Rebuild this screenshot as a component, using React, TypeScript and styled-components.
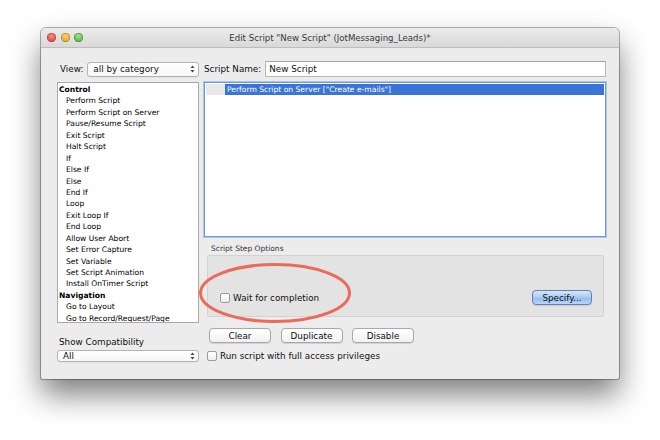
import React from 'react'
import styled, { createGlobalStyle } from 'styled-components'

const GlobalStyle = createGlobalStyle`
  html, body {
    margin: 0;
    padding: 0;
    background: #ffffff;
  }
  body {
    font-family: "DejaVu Sans", "Liberation Sans", sans-serif;
    color: #111111;
  }
`

const Stage = styled.div`
  width: 660px;
  height: 440px;
  padding: 28px 0 0 41px;
  box-sizing: border-box;
  overflow: hidden;
`

const Window = styled.div`
  position: relative;
  width: 578px;
  height: 351px;
  background: #ececec;
  border-radius: 5px 5px 2px 2px;
  box-shadow: 0 0 0 1px rgba(0, 0, 0, 0.3), 0 16px 30px rgba(0, 0, 0, 0.5);
  display: flex;
  flex-direction: column;
`

const TitleBar = styled.div`
  height: 20px;
  display: grid;
  grid-template-columns: 60px 1fr 60px;
  align-items: center;
  background: linear-gradient(#ebebeb, #d9d9d9);
  border-bottom: 1px solid #bdbdbd;
  border-radius: 5px 5px 0 0;
  box-sizing: border-box;
`

const Lights = styled.div`
  display: flex;
  gap: 4.5px;
  padding-left: 6px;
`

const Light = styled.span<{ $c: string; $d: string }>`
  width: 9px;
  height: 9px;
  border-radius: 50%;
  background: radial-gradient(circle at 50% 35%, ${p => p.$c} 0%, ${p => p.$d} 90%);
  box-shadow: inset 0 0 0 0.5px rgba(0, 0, 0, 0.35);
`

const Title = styled.div`
  text-align: center;
  font-size: 8.6px;
  color: #3a3a3a;
  white-space: nowrap;
`

const Body = styled.div`
  display: flex;
  gap: 5px;
  padding: 13px 13px 0 16px;
`

const LeftCol = styled.div`
  width: 142px;
  display: flex;
  flex-direction: column;
`

const RightCol = styled.div`
  flex: 1;
  display: flex;
  flex-direction: column;
`

const HeaderRow = styled.div`
  height: 16px;
  display: flex;
  align-items: center;
  gap: 4px;
  margin-bottom: 5px;
`

const Label = styled.span<{ $indent?: number }>`
  font-size: 8.8px;
  white-space: nowrap;
  padding-left: ${p => p.$indent ?? 0}px;
`

const Select = styled.div`
  height: 15px;
  flex: 1;
  box-sizing: border-box;
  background: linear-gradient(#ffffff, #f6f6f6);
  border: 1px solid #b3b3b3;
  border-radius: 3px;
  display: flex;
  align-items: center;
  justify-content: space-between;
  padding: 0 3px 0 5px;
  font-size: 8.8px;
  box-shadow: 0 0.5px 0 rgba(0, 0, 0, 0.08);
`

const TextInput = styled.div`
  flex: 1;
  height: 16px;
  box-sizing: border-box;
  background: #ffffff;
  border: 1px solid #b8b8b8;
  border-top-color: #a4a4a4;
  display: flex;
  align-items: center;
  padding-left: 3px;
  font-size: 8.8px;
`

const StepList = styled.div`
  height: 241px;
  box-sizing: border-box;
  background: #ffffff;
  border: 1px solid #a9a9a9;
  padding: 1px 0 0 1px;
  overflow: hidden;
`

const StepItem = styled.div<{ $header?: boolean }>`
  height: 11.45px;
  line-height: 11.45px;
  font-size: 7.6px;
  color: #000;
  white-space: nowrap;
  font-weight: ${p => (p.$header ? 'bold' : 'normal')};
  padding-left: ${p => (p.$header ? 0 : 7)}px;
`

const CompatLabel = styled(Label)`
  margin: 14px 0 3px 2px;
`

const ScriptList = styled.div`
  height: 155px;
  box-sizing: border-box;
  background: #ffffff;
  border: 1px solid #6f9ad6;
  box-shadow: 0 0 0 1px #aac5ec;
  padding: 1px 1px 0 1px;
`

const ScriptRow = styled.div`
  height: 11px;
  display: flex;
`

const RowGutter = styled.div`
  width: 19px;
  background: #e9e9e9;
`

const RowText = styled.div<{ $selected?: boolean }>`
  flex: 1;
  background: ${p => (p.$selected ? '#3a74d6' : 'transparent')};
  color: ${p => (p.$selected ? '#ffffff' : 'inherit')};
  font-size: 7.6px;
  line-height: 11px;
  padding-left: 2px;
  white-space: nowrap;
`

const GroupLabel = styled.div`
  font-size: 7.5px;
  color: #333;
  margin: 7px 0 2px 7px;
`

const OptionsBox = styled.div`
  height: 62px;
  margin: 0 2px 0 3px;
  box-sizing: border-box;
  background: #e3e3e3;
  border: 1px solid #d2d2d2;
  border-radius: 2px;
  display: flex;
  align-items: flex-end;
  justify-content: space-between;
  padding: 0 11px 11px 12px;
`

const CheckRow = styled.label`
  display: flex;
  align-items: center;
  gap: 3px;
  font-size: 8.8px;
`

const Box = styled.span`
  width: 10px;
  height: 10px;
  box-sizing: border-box;
  border: 1px solid #9c9c9c;
  border-radius: 2px;
  background: linear-gradient(#ffffff, #ededed);
`

const Button = styled.div<{ $w?: number; $primary?: boolean }>`
  width: ${p => p.$w ?? 62}px;
  height: 15px;
  box-sizing: border-box;
  border: 1px solid ${p => (p.$primary ? '#5f82b8' : '#a9a9a9')};
  border-radius: 4px;
  background: ${p =>
    p.$primary
      ? 'linear-gradient(#d6e6fa 0%, #a9caf2 50%, #8fb8ee 51%, #b9d6f7 100%)'
      : 'linear-gradient(#ffffff, #f1f1f1)'};
  display: flex;
  align-items: center;
  justify-content: center;
  font-size: 8.8px;
  box-shadow: 0 0.5px 1px rgba(0, 0, 0, 0.12);
`

const OptionInner = styled.div`
  display: flex;
  align-items: center;
  height: 15px;
`

const ButtonRow = styled.div`
  display: flex;
  gap: 9.5px;
  margin: 11px 0 0 5px;
`

const BottomCheck = styled.div`
  margin: 8px 0 0 3px;
`

const Highlight = styled.svg`
  position: absolute;
  left: 157px;
  top: 234px;
  pointer-events: none;
`

const Arrows = () => (
  <svg width="5" height="8" viewBox="0 0 5 8">
    <path d="M2.5 0.5 L4.5 3 L0.5 3 Z" fill="#444" />
    <path d="M2.5 7.5 L4.5 5 L0.5 5 Z" fill="#444" />
  </svg>
)

const steps: { text: string; header?: boolean }[] = [
  { text: 'Control', header: true },
  { text: 'Perform Script' },
  { text: 'Perform Script on Server' },
  { text: 'Pause/Resume Script' },
  { text: 'Exit Script' },
  { text: 'Halt Script' },
  { text: 'If' },
  { text: 'Else If' },
  { text: 'Else' },
  { text: 'End If' },
  { text: 'Loop' },
  { text: 'Exit Loop If' },
  { text: 'End Loop' },
  { text: 'Allow User Abort' },
  { text: 'Set Error Capture' },
  { text: 'Set Variable' },
  { text: 'Set Script Animation' },
  { text: 'Install OnTimer Script' },
  { text: 'Navigation', header: true },
  { text: 'Go to Layout' },
  { text: 'Go to Record/Request/Page' },
]

export default function App() {
  return (
    <>
      <GlobalStyle />
      <Stage>
        <Window>
          <TitleBar>
            <Lights>
              <Light $c="#ff8a80" $d="#d8382f" />
              <Light $c="#ffd36b" $d="#d89a1c" />
              <Light $c="#a6e38a" $d="#4ea23a" />
            </Lights>
            <Title>Edit Script "New Script" (JotMessaging_Leads)*</Title>
            <span />
          </TitleBar>
          <Body>
            <LeftCol>
              <HeaderRow>
                <Label $indent={3}>View:</Label>
                <Select>
                  <span>all by category</span>
                  <Arrows />
                </Select>
              </HeaderRow>
              <StepList>
                {steps.map(s => (
                  <StepItem key={s.text} $header={s.header}>
                    {s.text}
                  </StepItem>
                ))}
              </StepList>
              <CompatLabel>Show Compatibility</CompatLabel>
              <Select>
                <span>All</span>
                <Arrows />
              </Select>
            </LeftCol>
            <RightCol>
              <HeaderRow>
                <Label>Script Name:</Label>
                <TextInput>New Script</TextInput>
              </HeaderRow>
              <ScriptList>
                <ScriptRow>
                  <RowGutter />
                  <RowText $selected>Perform Script on Server ["Create e-mails"]</RowText>
                </ScriptRow>
              </ScriptList>
              <GroupLabel>Script Step Options</GroupLabel>
              <OptionsBox>
                <OptionInner>
                  <CheckRow>
                    <Box />
                    Wait for completion
                  </CheckRow>
                </OptionInner>
                <Button $w={60} $primary>
                  Specify...
                </Button>
              </OptionsBox>
              <ButtonRow>
                <Button>Clear</Button>
                <Button>Duplicate</Button>
                <Button>Disable</Button>
              </ButtonRow>
              <BottomCheck>
                <CheckRow>
                  <Box />
                  Run script with full access privileges
                </CheckRow>
              </BottomCheck>
            </RightCol>
          </Body>
          <Highlight width="154" height="62" viewBox="0 0 154 62">
            <ellipse cx="77" cy="31" rx="74.5" ry="28.5" fill="none" stroke="#ec6a58" strokeWidth="3" />
          </Highlight>
        </Window>
      </Stage>
    </>
  )
}
